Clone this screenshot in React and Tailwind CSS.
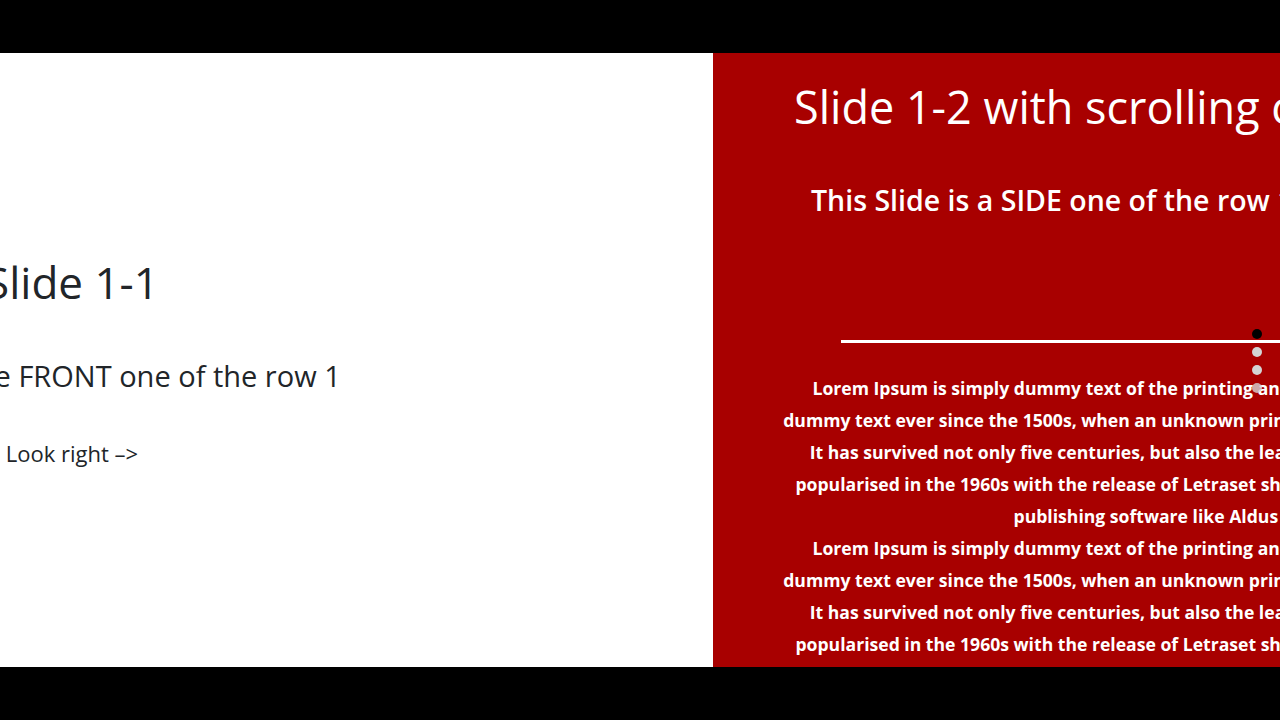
import React from "react";

const lines = [
  "Lorem Ipsum is simply dummy text of the printing and typesetting industry. Lorem Ipsum has been the industry's standard",
  "dummy text ever since the 1500s, when an unknown printer took a galley of type and scrambled it to make a type specimen book.",
  "It has survived not only five centuries, but also the leap into electronic typesetting, remaining essentially unchanged. It was",
  "popularised in the 1960s with the release of Letraset sheets containing Lorem Ipsum passages, and more recently with desktop",
  "publishing software like Aldus PageMaker including versions of Lorem Ipsum.",
];

export default function App() {
  const font = { fontFamily: "'Open Sans', 'Noto Sans', sans-serif" };
  return (
    <div className="w-[1280px] h-[720px] bg-black flex flex-col overflow-hidden" style={font}>
      <div className="h-[53px] shrink-0 bg-black" />
      <div className="relative h-[614px] shrink-0 flex overflow-hidden">
        {/* Left slide (front) */}
        <div className="w-[713px] shrink-0 bg-white overflow-hidden">
          <div className="w-[1280px] ml-[-568px] flex flex-col items-center text-[#212529] pt-[201px]">
            <h1 className="text-[44px] leading-[56px] font-normal whitespace-nowrap">Slide 1-1</h1>
            <p className="mt-[48px] text-[29px] leading-[36px] whitespace-nowrap">This Slide is the FRONT one of the row 1</p>
            <p className="mt-[44px] text-[22px] leading-[30px] whitespace-nowrap">Look right –&gt;</p>
          </div>
        </div>
        {/* Right slide (side) */}
        <div className="w-[1280px] shrink-0 bg-[#a80000] text-white">
          <h1 className="pl-[81px] pt-[26px] text-[45px] leading-[56px] font-medium whitespace-nowrap">
            Slide 1-2 with scrolling content
          </h1>
          <p className="pl-[98px] mt-[47px] text-[28.5px] leading-[36px] font-semibold whitespace-nowrap">
            This Slide is a SIDE one of the row 1
          </p>
          <div className="mx-auto mt-[122px] w-[1024px] h-[3px] bg-white" />
          <div className="mt-[29px] flex flex-col items-center text-[17.6px] leading-[32px] font-bold">
            {[0, 1, 2].map((r) =>
              lines.map((l, i) => (
                <div key={r + "-" + i} className="whitespace-nowrap">
                  {l}
                </div>
              ))
            )}
          </div>
        </div>
        {/* fullPage navigation dots */}
        <div className="absolute left-[1252px] top-[276px] flex flex-col gap-[8px]">
          <span className="block w-[10px] h-[10px] rounded-full bg-black" />
          <span className="block w-[10px] h-[10px] rounded-full bg-[#d4d4d4]" />
          <span className="block w-[10px] h-[10px] rounded-full bg-[#d4d4d4]" />
          <span className="block w-[10px] h-[10px] rounded-full bg-[#d4d4d4]/80" />
        </div>
      </div>
      <div className="h-[53px] shrink-0 bg-black" />
    </div>
  );
}
